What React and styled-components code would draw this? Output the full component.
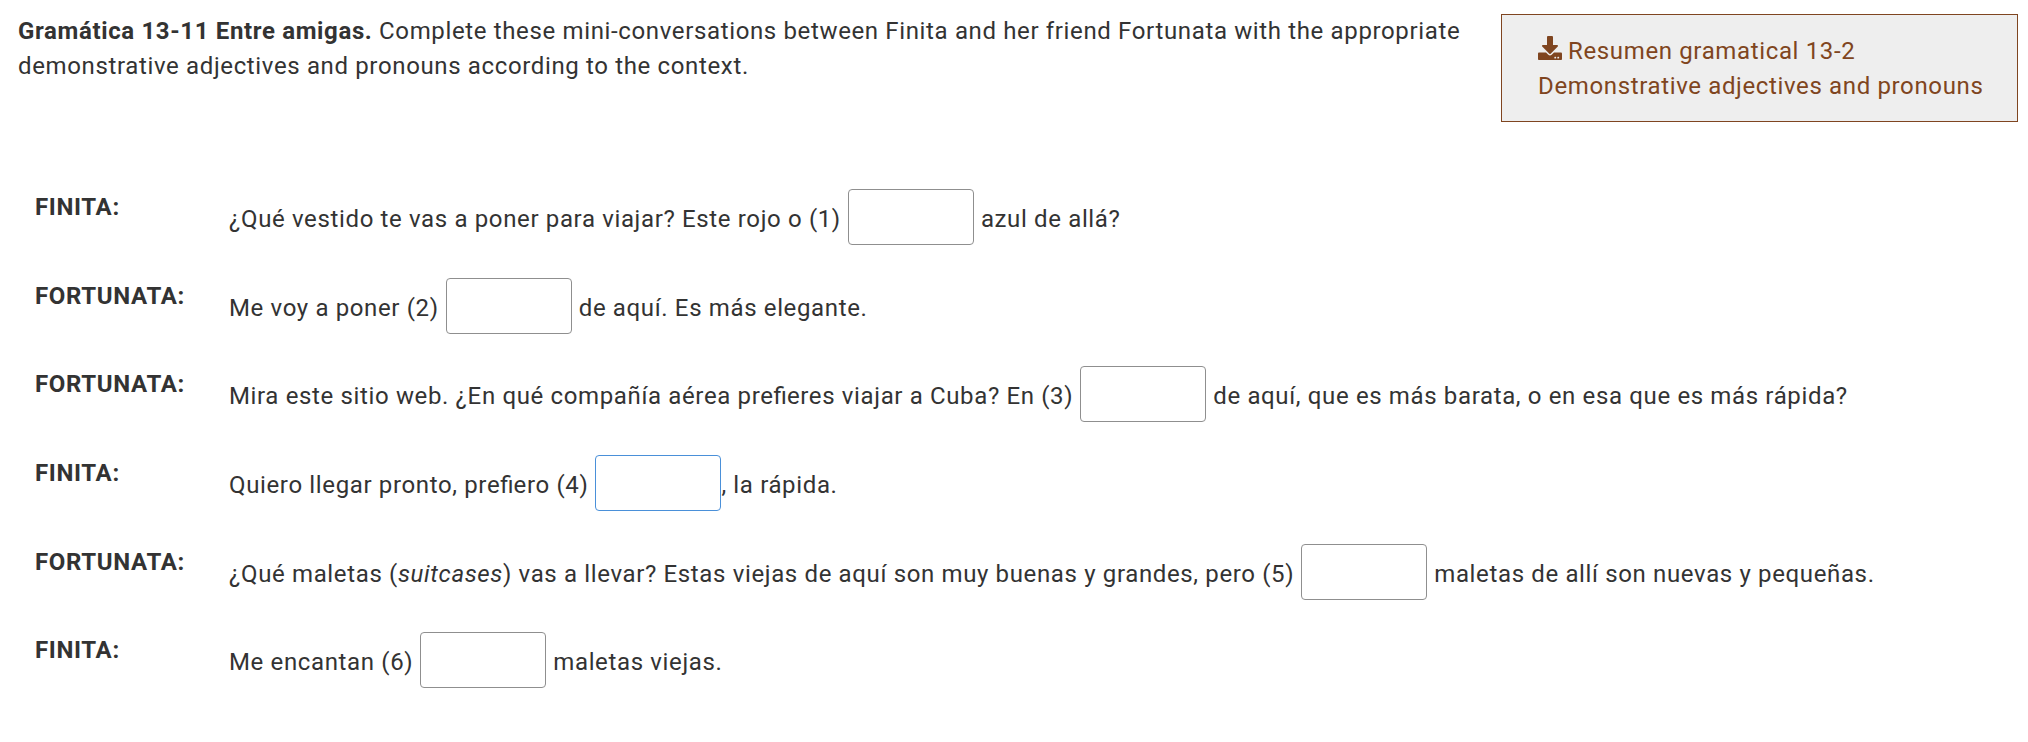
import React from "react";
import styled, { createGlobalStyle } from "styled-components";
import { FaDownload } from "react-icons/fa";

const GlobalStyle = createGlobalStyle`
  body {
    margin: 0;
    background: #fff;
    font-family: Roboto, "Liberation Sans", sans-serif;
    font-size: 24px;
    letter-spacing: 0.64px;
    line-height: 35px;
    color: #333;
  }
`;

const Page = styled.div`
  width: 2028px;
  height: 742px;
  overflow: hidden;
`;

const Header = styled.div`
  display: flex;
  justify-content: space-between;
  align-items: flex-start;
  padding: 14px 10px 0 18px;
`;

const Intro = styled.p`
  margin: 0;
  width: 1460px;
`;

const Summary = styled.a`
  display: block;
  box-sizing: border-box;
  width: 517px;
  height: 108px;
  padding: 19px 0 0 36px;
  background: #eee;
  border: 1px solid #7f4520;
  color: #7f4520;
`;

const SummaryIcon = styled(FaDownload)`
  width: 24px;
  height: 24px;
  margin-right: 6px;
  vertical-align: -1px;
`;

const Dialogue = styled.div`
  display: flex;
  flex-direction: column;
  padding: 56px 0 0 35px;
`;

const Row = styled.div`
  display: flex;
  height: 88.7px;
`;

const Speaker = styled.strong`
  flex: 0 0 194px;
  padding-top: 12px;
  font-weight: 700;
`;

const Line = styled.div`
  padding-top: 11px;
  white-space: nowrap;
`;

/* the reference joins "fi" as a ligature, which letter-spacing would switch off */
const Lig = styled.span`
  letter-spacing: 0;
`;

const Blank = styled.input`
  box-sizing: border-box;
  width: 126px;
  height: 56px;
  margin: 0 ${(p) => (p.$tight ? "0" : "7px")} 7px 7px;
  vertical-align: middle;
  background: #fff;
  border: 1px solid ${(p) => (p.$focused ? "#4a90d9" : "#8f8f8f")};
  border-radius: 4px;
  outline: none;
`;

const rows = [
  ["FINITA:", <>¿Qué vestido te vas a poner para viajar? Este rojo o (1)<Blank />azul de allá?</>],
  ["FORTUNATA:", <>Me voy a poner (2)<Blank />de aquí. Es más elegante.</>],
  ["FORTUNATA:", <>Mira este sitio web. ¿En qué compañía aérea pre<Lig>fi</Lig>eres viajar a Cuba? En (3)<Blank />de aquí, que es más barata, o en esa que es más rápida?</>],
  ["FINITA:", <>Quiero llegar pronto, pre<Lig>fi</Lig>ero (4)<Blank $focused $tight />, la rápida.</>],
  ["FORTUNATA:", <>¿Qué maletas (<em>suitcases</em>) vas a llevar? Estas viejas de aquí son muy buenas y grandes, pero (5)<Blank />maletas de allí son nuevas y pequeñas.</>],
  ["FINITA:", <>Me encantan (6)<Blank />maletas viejas.</>],
];

export default function App() {
  return (
    <Page>
      <GlobalStyle />
      <Header>
        <Intro>
          <strong>Gramática 13-11 Entre amigas.</strong> Complete these mini-conversations between Finita and her friend Fortunata with the appropriate demonstrative adjectives and pronouns according to the context.
        </Intro>
        <Summary>
          <SummaryIcon />
          Resumen gramatical 13-2
          <br />
          Demonstrative adjectives and pronouns
        </Summary>
      </Header>
      <Dialogue>
        {rows.map(([who, text], i) => (
          <Row key={i}>
            <Speaker>{who}</Speaker>
            <Line>{text}</Line>
          </Row>
        ))}
      </Dialogue>
    </Page>
  );
}
